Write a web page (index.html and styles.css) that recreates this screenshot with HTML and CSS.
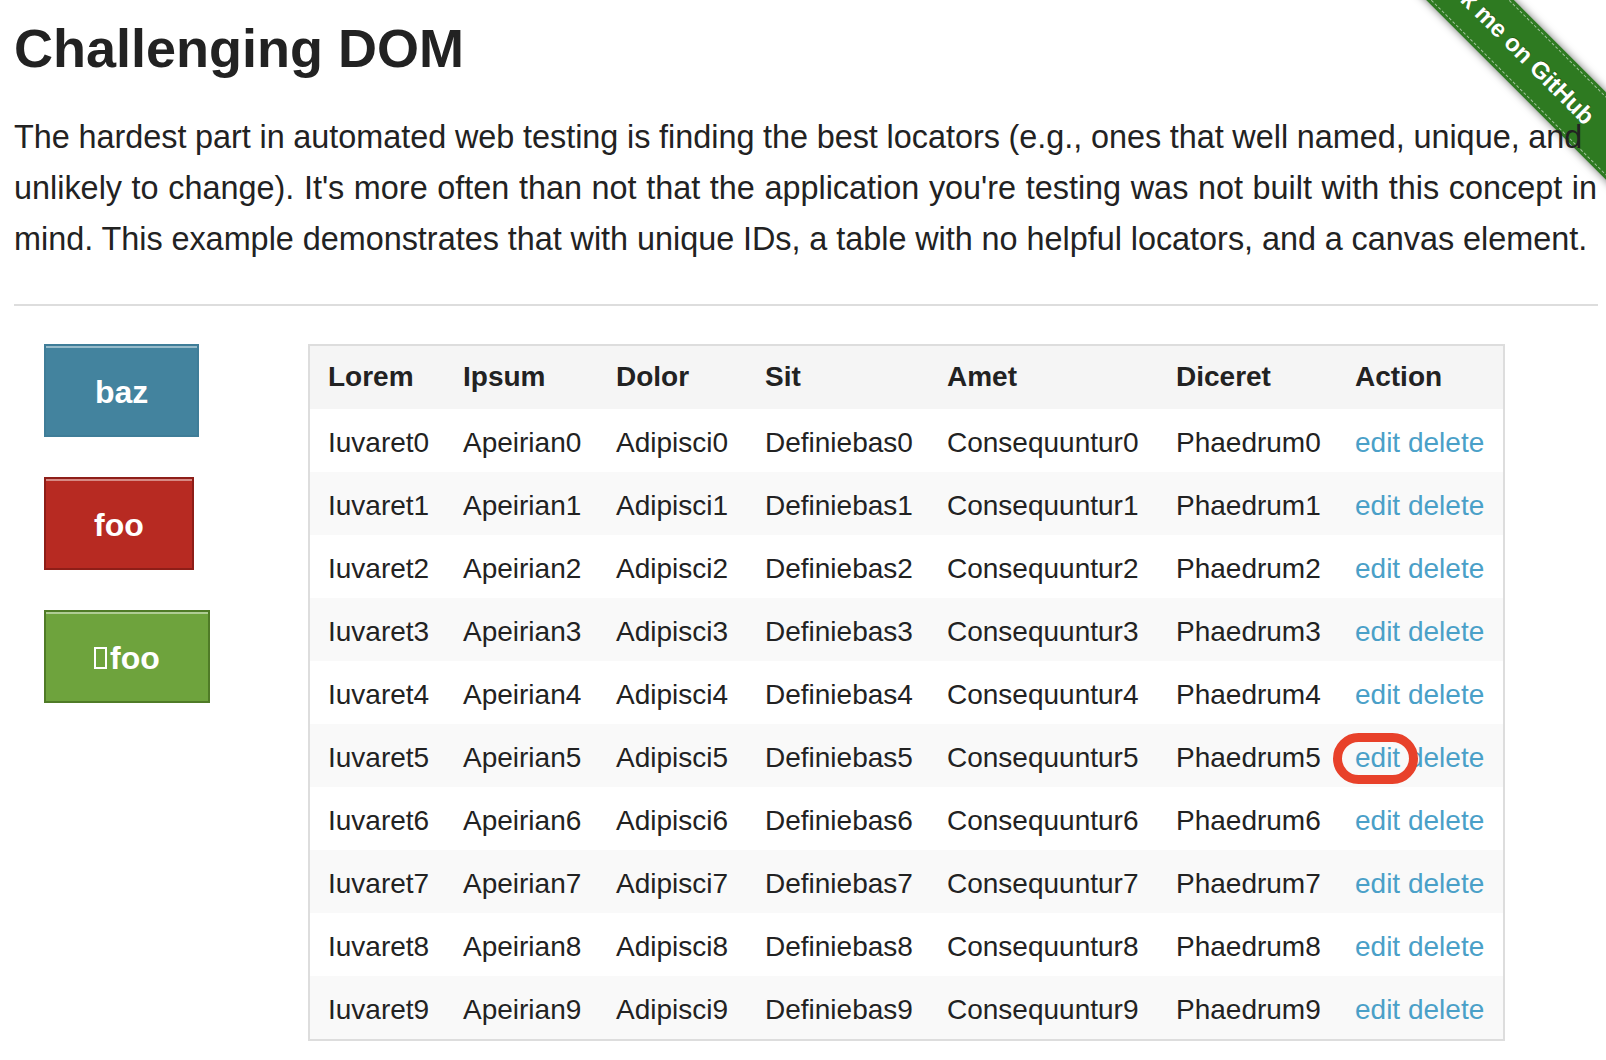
FILE: index.html
```html
<!DOCTYPE html>
<html lang="en">
<head>
<meta charset="utf-8">
<title>Challenging DOM</title>
<link rel="stylesheet" href="styles.css">
</head>
<body>
<div class="ribbon"><a class="ribbon-band" href="#">Fork me on GitHub</a></div>
<div class="page">
  <h3 class="title">Challenging DOM</h3>
  <p class="intro"><span class="l1">The hardest part in automated web testing is finding the best locators (e.g., ones that well named, unique, and</span><br><span class="l2">unlikely to change). It's more often than not that the application you're testing was not built with this concept in</span><br><span class="l3">mind. This example demonstrates that with unique IDs, a table with no helpful locators, and a canvas element.</span></p>
  <hr class="rule">
  <div class="content">
    <div class="buttons">
      <a class="button primary" href="#">baz</a>
      <a class="button alert" href="#">foo</a>
      <a class="button success" href="#"><span class="tofu"></span>foo</a>
    </div>
    <table class="grid">
      <colgroup>
        <col class="c1"><col class="c2"><col class="c3"><col class="c4"><col class="c5"><col class="c6"><col class="c7">
      </colgroup>
      <thead>
        <tr><th>Lorem</th><th>Ipsum</th><th>Dolor</th><th>Sit</th><th>Amet</th><th>Diceret</th><th>Action</th></tr>
      </thead>
      <tbody>
        <tr><td>Iuvaret0</td><td>Apeirian0</td><td>Adipisci0</td><td>Definiebas0</td><td>Consequuntur0</td><td>Phaedrum0</td><td><a href="#">edit</a> <a href="#">delete</a></td></tr>
        <tr><td>Iuvaret1</td><td>Apeirian1</td><td>Adipisci1</td><td>Definiebas1</td><td>Consequuntur1</td><td>Phaedrum1</td><td><a href="#">edit</a> <a href="#">delete</a></td></tr>
        <tr><td>Iuvaret2</td><td>Apeirian2</td><td>Adipisci2</td><td>Definiebas2</td><td>Consequuntur2</td><td>Phaedrum2</td><td><a href="#">edit</a> <a href="#">delete</a></td></tr>
        <tr><td>Iuvaret3</td><td>Apeirian3</td><td>Adipisci3</td><td>Definiebas3</td><td>Consequuntur3</td><td>Phaedrum3</td><td><a href="#">edit</a> <a href="#">delete</a></td></tr>
        <tr><td>Iuvaret4</td><td>Apeirian4</td><td>Adipisci4</td><td>Definiebas4</td><td>Consequuntur4</td><td>Phaedrum4</td><td><a href="#">edit</a> <a href="#">delete</a></td></tr>
        <tr><td>Iuvaret5</td><td>Apeirian5</td><td>Adipisci5</td><td>Definiebas5</td><td>Consequuntur5</td><td>Phaedrum5</td><td><a class="marked" href="#">edit</a> <a href="#">delete</a></td></tr>
        <tr><td>Iuvaret6</td><td>Apeirian6</td><td>Adipisci6</td><td>Definiebas6</td><td>Consequuntur6</td><td>Phaedrum6</td><td><a href="#">edit</a> <a href="#">delete</a></td></tr>
        <tr><td>Iuvaret7</td><td>Apeirian7</td><td>Adipisci7</td><td>Definiebas7</td><td>Consequuntur7</td><td>Phaedrum7</td><td><a href="#">edit</a> <a href="#">delete</a></td></tr>
        <tr><td>Iuvaret8</td><td>Apeirian8</td><td>Adipisci8</td><td>Definiebas8</td><td>Consequuntur8</td><td>Phaedrum8</td><td><a href="#">edit</a> <a href="#">delete</a></td></tr>
        <tr><td>Iuvaret9</td><td>Apeirian9</td><td>Adipisci9</td><td>Definiebas9</td><td>Consequuntur9</td><td>Phaedrum9</td><td><a href="#">edit</a> <a href="#">delete</a></td></tr>
      </tbody>
    </table>
  </div>
</div>
</body>
</html>
```
FILE: styles.css
```css
html, body {
  margin: 0;
  padding: 0;
  background: #fff;
  overflow: hidden;
}
body {
  font-family: "Liberation Sans", Arial, Helvetica, sans-serif;
  color: #222;
  font-size: 30px;
}
.page {
  position: relative;
  z-index: 1;
  padding: 16px 8px 0 14px;
}
.title {
  margin: 0;
  font-size: 54px;
  line-height: 64.8px;
  font-weight: 700;
  color: #222;
}
.intro {
  margin: 31px 0 0 0;
  font-size: 32.4px;
  line-height: 51px;
  white-space: nowrap;
}
.l1 { word-spacing: -0.4px; }
.l2 { word-spacing: 0.6px; }
.l3 { word-spacing: -0.2px; }
.rule {
  margin: 39px 0 0 0;
  border: 0;
  height: 2px;
  background: #dddddd;
}
.content {
  display: flex;
  align-items: flex-start;
  margin-top: 38px;
}
.buttons {
  width: 264px;
  padding-left: 30px;
  display: flex;
  flex-direction: column;
  align-items: flex-start;
  gap: 40px;
}
.button {
  display: inline-block;
  box-sizing: border-box;
  height: 93px;
  padding: 3px 49px 0 49px;
  border: 2px solid;
  font-size: 32px;
  font-weight: 700;
  line-height: 86px;
  color: #fff;
  text-decoration: none;
  box-shadow: inset 0 2px 0 rgba(255, 255, 255, 0.45);
}
.primary {
  background: #43839e;
  border-color: #3f7d98;
}
.alert {
  padding-left: 48px;
  padding-right: 48px;
  background: #b72a22;
  border-color: #8e1e18;
}
.success {
  padding-left: 48px;
  padding-right: 48px;
  background: #6ea33d;
  border-color: #4f7b27;
}
.tofu {
  display: inline-block;
  box-sizing: border-box;
  width: 13px;
  height: 22px;
  border: 2.5px solid #fff;
  margin-right: 3px;
}
.grid {
  table-layout: fixed;
  width: 1197px;
  border-collapse: separate;
  border-spacing: 0;
  border: 2px solid #dddddd;
}
.c1 { width: 135px; }
.c2 { width: 153px; }
.c3 { width: 149px; }
.c4 { width: 182px; }
.c5 { width: 229px; }
.c6 { width: 179px; }
.c7 { width: 166px; }
.grid th,
.grid td {
  box-sizing: border-box;
  height: 63px;
  padding: 0 0 0 18px;
  text-align: left;
  vertical-align: middle;
  white-space: nowrap;
  font-size: 28px;
  color: #222;
}
.grid td {
  padding-top: 6px;
}
.grid th {
  font-weight: 700;
  background: #f5f5f5;
}
.grid tbody tr:nth-of-type(even) td {
  background: #f9f9f9;
}
.grid a {
  color: #4aa0c8;
  text-decoration: none;
}
.grid a.marked {
  position: relative;
}
.grid a.marked::after {
  content: "";
  position: absolute;
  left: -22px;
  top: 50%;
  width: 85px;
  height: 51px;
  margin-top: -25px;
  box-sizing: border-box;
  border: 9px solid #e8412a;
  border-radius: 26px;
}
.ribbon {
  position: absolute;
  top: 0;
  right: 0;
  width: 300px;
  height: 300px;
  overflow: hidden;
  z-index: 0;
}
.ribbon-band {
  position: absolute;
  left: -2px;
  top: 13px;
  width: 420px;
  height: 62px;
  box-sizing: border-box;
  transform: rotate(45deg);
  background: #2e7a21;
  color: #fff;
  font-size: 24px;
  font-weight: 700;
  line-height: 62px;
  text-align: center;
  text-decoration: none;
  box-shadow: 0 0 8px rgba(0, 0, 0, 0.55);
  text-shadow: 0 -1px 0 rgba(0, 0, 0, 0.3);
}
.ribbon-band::before {
  content: "";
  position: absolute;
  left: 0;
  right: 0;
  top: 3px;
  bottom: 3px;
  border-top: 1px dashed rgba(255, 255, 255, 0.55);
  border-bottom: 1px dashed rgba(255, 255, 255, 0.55);
}
```
